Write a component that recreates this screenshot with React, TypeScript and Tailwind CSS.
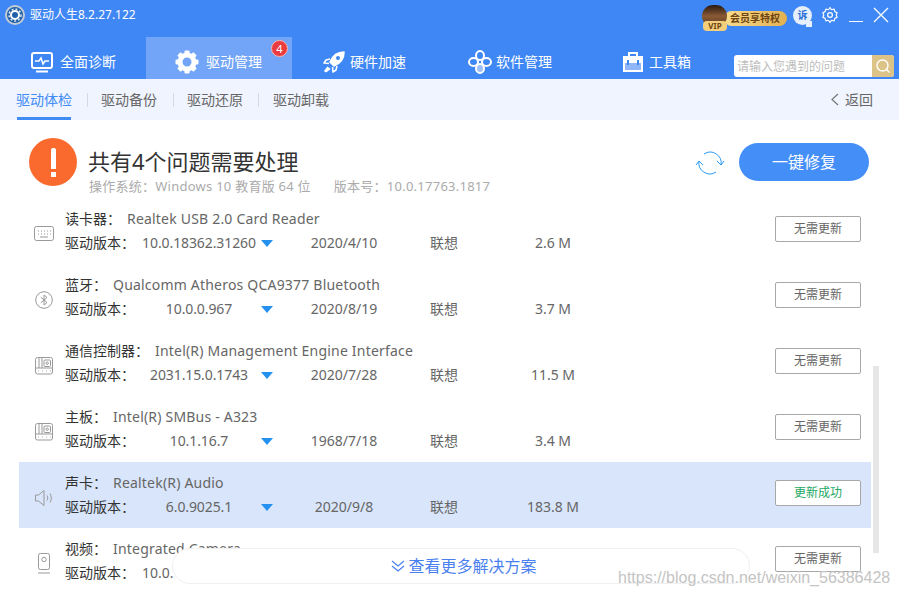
import React from "react";

function Monitor() {
  return (
    <svg width="24" height="24" viewBox="0 0 24 24" fill="none" className="stroke-white">
      <rect x="2" y="3" width="20" height="15" rx="2" strokeWidth="2" />
      <path d="M5 11h4l2-3 2 6 2-3h4" strokeWidth="1.5" />
      <path d="M6 21.5h12" strokeWidth="2" />
    </svg>
  );
}
function Gear({ size = 24, sw = 5 }: { size?: number; sw?: number }) {
  const teeth = Array.from({ length: 8 }, (_, i) => i * 45);
  return (
    <svg width={size} height={size} viewBox="0 0 24 24" fill="none">
      {teeth.map((a) => (
        <rect key={a} x="9.5" y="0.5" width="5" height="6" rx="1" fill="#fff" transform={`rotate(${a} 12 12)`} />
      ))}
      <circle cx="12" cy="12" r="7" stroke="#fff" strokeWidth={sw} />
    </svg>
  );
}
function Rocket() {
  return (
    <svg width="24" height="24" viewBox="0 0 24 24" fill="none" stroke="#fff" strokeWidth="1.6" strokeLinejoin="round">
      <path d="M22 2c-6 0-11 3-14 10l4 4c7-3 10-8 10-14Z" fill="#fff" />
      <circle cx="16" cy="8" r="2" fill="#3f87f5" stroke="none" />
      <path d="M8 9 4 10l-2 3 5 .5M15 16l-1 4-3 2-.5-5" />
      <path d="M6 17l-3 4 1 .5 4-3" fill="#fff" />
    </svg>
  );
}
function Flower() {
  return (
    <svg width="24" height="24" viewBox="0 0 24 24" fill="none" stroke="#fff" strokeWidth="2">
      <ellipse cx="12" cy="5.5" rx="4" ry="4.5" />
      <ellipse cx="12" cy="18.5" rx="4" ry="4.5" fill="#9cc0fa" />
      <ellipse cx="5.5" cy="12" rx="4.5" ry="4" />
      <ellipse cx="18.5" cy="12" rx="4.5" ry="4" />
    </svg>
  );
}
function Toolbox() {
  return (
    <svg width="22" height="22" viewBox="0 0 22 22" fill="none">
      <path d="M7 5V2h8v3" stroke="#fff" strokeWidth="2" />
      <rect x="1" y="5" width="20" height="16" fill="#fff" />
      <rect x="3" y="12" width="16" height="7" fill="#8fb6f8" />
      <rect x="5" y="9" width="2" height="5" fill="#3f87f5" />
      <rect x="15" y="9" width="2" height="5" fill="#3f87f5" />
    </svg>
  );
}
function Keyboard() {
  return (
    <svg width="20" height="15" viewBox="0 0 20 15" fill="none" stroke="#999">
      <rect x="0.5" y="0.5" width="19" height="14" rx="2" />
      <path d="M4 5h1M7 5h1M10 5h1M13 5h1M16 5h1M4 8h1M7 8h1M10 8h1M13 8h1M16 8h1M6 11h8" />
    </svg>
  );
}
function Bluetooth() {
  return (
    <svg width="18" height="18" viewBox="0 0 18 18" fill="none" stroke="#999">
      <circle cx="9" cy="9" r="8.3" />
      <path d="M5.8 6.2 12 11.5 9 14V4l3 2.5-6.2 5.3" />
    </svg>
  );
}
function Board() {
  return (
    <svg width="18" height="18" viewBox="0 0 18 18" fill="none" stroke="#999">
      <rect x="0.5" y="0.5" width="17" height="16.5" rx="2" />
      <path d="M1 11h16M4 1v10M7 1v10M3 14h0.8M7 14h0.8M11 14h0.8M15 14h0.8" />
      <rect x="9" y="3" width="6.5" height="6.5" rx="1" />
      <circle cx="12.2" cy="6.2" r="1.2" />
    </svg>
  );
}
function Speaker() {
  return (
    <svg width="18" height="18" viewBox="0 0 18 18" fill="none" stroke="#999">
      <path d="M0.5 6v6h3l5.5 4.5v-15L3.5 6h-3Z" />
      <path d="M12 6.5c1 1.6 1 3.4 0 5M15 4.5c1.8 3 1.8 6 0 9" />
    </svg>
  );
}
function Camera() {
  return (
    <svg width="14" height="21" viewBox="0 0 14 21" fill="none" stroke="#999">
      <rect x="1.5" y="0.5" width="11" height="16" rx="2" />
      <circle cx="7" cy="6.5" r="2.2" />
      <path d="M1 20h12" />
    </svg>
  );
}

const rows = [
  { icon: <Keyboard />, type: "读卡器", name: "Realtek USB 2.0 Card Reader", ver: "10.0.18362.31260", date: "2020/4/10", size: "2.6 M" },
  { icon: <Bluetooth />, type: "蓝牙", name: "Qualcomm Atheros QCA9377 Bluetooth", ver: "10.0.0.967", date: "2020/8/19", size: "3.7 M" },
  { icon: <Board />, type: "通信控制器", name: "Intel(R) Management Engine Interface", ver: "2031.15.0.1743", date: "2020/7/28", size: "11.5 M" },
  { icon: <Board />, type: "主板", name: "Intel(R) SMBus - A323", ver: "10.1.16.7", date: "1968/7/18", size: "3.4 M" },
  { icon: <Speaker />, type: "声卡", name: "Realtek(R) Audio", ver: "6.0.9025.1", date: "2020/9/8", size: "183.8 M", active: true },
  { icon: <Camera />, type: "视频", name: "Integrated Camera", ver: "10.0.", date: "", size: "", cut: true },
];

const tabs = [
  { label: "全面诊断", icon: <Monitor />, cls: "w-[146px] pl-[30px] gap-[6px]" },
  { label: "驱动管理", icon: <Gear />, cls: "w-[146px] pl-[29px] gap-[7px] bg-[#72a5f7] relative" },
  { label: "硬件加速", icon: <Rocket />, cls: "w-[146px] pl-[30px] gap-[4px]" },
  { label: "软件管理", icon: <Flower />, cls: "w-[184px] pl-[30px] gap-[4px]" },
  { label: "工具箱", icon: <Toolbox />, cls: "w-[112px] pl-0 gap-[5px]" },
];

export default function App() {
  return (
    <div
      className="relative w-[899px] h-[597px] overflow-hidden bg-white flex flex-col"
      style={{ fontFamily: '"Noto Sans", "Noto Sans CJK SC", sans-serif' }}
    >
      <header className="bg-[#3f87f5] h-[79px] shrink-0 text-white flex flex-col">
        <div className="h-[37px] flex items-center pl-[5px] pr-[10px]">
          <svg width="20" height="20" viewBox="0 0 20 20" fill="none" className="mt-[-8px]">
            <circle cx="10" cy="10" r="9" fill="#1f5fa8" stroke="#c3ccd6" strokeWidth="2" />
            <circle cx="10" cy="10" r="4" stroke="#fff" strokeWidth="2" />
            <circle cx="10" cy="10" r="6" stroke="#dfe7f0" strokeWidth="1.5" strokeDasharray="2 2" />
          </svg>
          <span className="ml-[5px] text-[12px] leading-none mt-[-7px]">驱动人生8.2.27.122</span>
          <div className="ml-auto flex items-center mt-[-7px]">
            <div className="relative w-[85px] h-[26px] flex items-center mt-[6px]">
              <div className="ml-[22px] w-[63px] h-[15px] rounded-full bg-gradient-to-r from-[#f7dc8e] to-[#e3b04f] text-[#6e4413] text-[10px] font-bold leading-[15px] pl-[6px] whitespace-nowrap">
                会员享特权
              </div>
              <div className="absolute left-0 top-0 w-[25px] h-[22px] rounded-full bg-gradient-to-b from-[#2a1a12] via-[#8a5a34] to-[#5b3a22]" />
              <div className="absolute left-[1px] bottom-0 w-[24px] h-[10px] rounded-[4px] bg-[#f3cf7b] text-[#6e4413] text-[8px] font-bold leading-[10px] text-center">
                VIP
              </div>
            </div>
            <div className="relative ml-[6px] w-[19px] h-[19px] rounded-full bg-[#e6effd] text-[#2d6fd8] text-[10px] font-bold leading-[19px] text-center">
              诉
              <span className="absolute right-0 bottom-[-2px] w-[6px] h-[6px] bg-[#e6effd]" />
            </div>
            <svg width="18" height="18" viewBox="0 0 24 24" fill="none" stroke="#fff" strokeWidth="1.6" className="ml-[9px]">
              <circle cx="12" cy="12" r="3.2" />
              <path d="M12 2l2 3 3.5-.8 1 3.3 3 1.5-1.2 3 1.2 3-3 1.500-1 3.300-3.500-.8-2 3-2-3-3.500.8-1-3.300-3-1.500 1.200-3-1.200-3 3-1.500 1-3.300 3.500.8Z" strokeLinejoin="round" />
            </svg>
            <div className="ml-[10px] w-[14px] h-px bg-white mt-[13px]" />
            <svg width="16" height="16" viewBox="0 0 16 16" stroke="#fff" strokeWidth="1.3" className="ml-[10px]">
              <path d="M1 1l14 14M15 1 1 15" />
            </svg>
          </div>
        </div>
        <nav className="h-[42px] flex items-stretch text-[14px]">
          {tabs.map((t) => (
            <div key={t.label} className={`${t.cls} flex items-center shrink-0 pt-[8px]`}>
              {t.icon}
              <span className="leading-none">{t.label}</span>
              {t.label === "驱动管理" && (
                <span className="absolute right-[4px] top-[3px] w-[17px] h-[17px] rounded-full bg-[#ea3b3f] border border-[#f7b7b7] text-[11px] leading-[15px] text-center">
                  4
                </span>
              )}
            </div>
          ))}
          <div className="mt-[18px] w-[160px] h-[22px] flex rounded-[3px] overflow-hidden bg-white">
            <span className="flex-1 text-[12px] text-[#bdbdbd] leading-[23px] pl-[3px]">请输入您遇到的问题</span>
            <span className="w-[22px] bg-[#dcc387] flex items-center justify-center">
              <svg width="16" height="16" viewBox="0 0 16 16" fill="none" stroke="#fff" strokeWidth="1.4">
                <circle cx="7.500" cy="7.500" r="5.500" />
                <path d="M11.500 11.500 14.500 14.500" />
              </svg>
            </span>
          </div>
        </nav>
      </header>

      <div className="h-[41px] shrink-0 bg-[#f0f4fe] flex items-center text-[14px] text-[#666] pl-[16px] pr-[26px]">
        <span className="relative w-[56px] text-[#418bf7] text-center leading-[41px]">
          驱动体检
          <span className="absolute left-[1px] right-[1px] bottom-0 h-[3px] bg-[#418bf7]" />
        </span>
        <span className="w-px h-[14px] bg-[#d5d9e2] ml-[15px] mr-[13px]" />
        <span>驱动备份</span>
        <span className="w-px h-[14px] bg-[#d5d9e2] ml-[16px] mr-[13px]" />
        <span>驱动还原</span>
        <span className="w-px h-[14px] bg-[#d5d9e2] ml-[15px] mr-[14px]" />
        <span>驱动卸载</span>
        <svg width="9" height="13" viewBox="0 0 9 13" fill="none" stroke="#777" strokeWidth="1.2" className="ml-auto">
          <path d="M8 1 2 6.500 8 12" />
        </svg>
        <span className="ml-[6px]">返回</span>
      </div>

      <section className="h-[87px] shrink-0 flex pl-[29px] pr-[30px] pt-[18px]">
        <div className="w-[48px] h-[48px] rounded-full bg-[#fa6a2e] flex flex-col items-center justify-center gap-[3px]">
          <span className="w-[5px] h-[21px] bg-white rounded-t-[2px]" />
          <span className="w-[5px] h-[5px] bg-white" />
        </div>
        <div className="ml-[11px] mt-[11px] flex flex-col">
          <h1 className="text-[22px] leading-[24px] text-[#333] font-normal">共有4个问题需要处理</h1>
          <p className="text-[13px] leading-[18px] mt-[4px] pl-px text-[#ababab] whitespace-nowrap tracking-[0.25px]">
            操作系统：Windows 10 教育版 64 位<span className="ml-[23px]">版本号：10.0.17763.1817</span>
          </p>
        </div>
        <div className="ml-auto flex items-start">
          <svg width="30" height="24" viewBox="0 0 30 24" fill="none" stroke="#2b9af3" strokeWidth="1" className="mt-[13px] mr-[14px]">
            <path d="M9 3A11 11 0 0 1 26 14M22 10l4 4 3-4" />
            <path d="M21 21A11 11 0 0 1 4 10M1 14l3-4 4 4" />
          </svg>
          <button className="w-[130px] h-[38px] mt-[5px] rounded-full bg-[#448ef7] text-white text-[16px]">一键修复</button>
        </div>
      </section>

      <div className="flex-1 min-h-0 overflow-hidden flex pl-[19px]">
        <ul className="w-[852px] shrink-0 mt-[-9px]">
          {rows.map((r) => (
            <li key={r.type} className={`h-[66px] flex relative ${r.active ? "bg-[#d8e5fa]" : ""}`}>
              <div className="w-[46px] shrink-0 flex items-center justify-center pl-[4px] pt-[5px]">{r.icon}</div>
              <div className="w-[710px] shrink-0 pt-[9px] text-[14px] text-[#666] leading-[24px]">
                <div className="whitespace-nowrap">
                  <span className="text-[#333]">{r.type}：</span>
                  <span className="ml-[6px] tracking-[0.2px]">{r.name}</span>
                </div>
                <div className="flex items-center">
                  <span className="w-[77px] text-[#333] shrink-0">驱动版本：</span>
                  {r.cut ? (
                    <span className="shrink-0">{r.ver}</span>
                  ) : (
                    <>
                      <span className="w-[114px] text-center shrink-0 tracking-[-0.1px]">{r.ver}</span>
                      <svg width="12" height="7" viewBox="0 0 12 7" className="ml-[5px] shrink-0">
                        <path d="M0 0h12L6 7Z" fill="#2491ee" />
                      </svg>
                      <span className="w-[96px] ml-[23px] text-center shrink-0">{r.date}</span>
                      <span className="ml-[38px] w-[28px] shrink-0">联想</span>
                      <span className="ml-[55px] w-[80px] text-center shrink-0">{r.size}</span>
                    </>
                  )}
                </div>
              </div>
              <button
                className={`mt-[18px] w-[86px] h-[26px] bg-white border border-[#a8a8a8] rounded-[2px] text-[12px] ${r.active ? "text-[#21a862]" : "text-[#666]"}`}
              >
                {r.active ? "更新成功" : "无需更新"}
              </button>
            </li>
          ))}
        </ul>
        <div className="ml-[2px] w-[6px] mt-[159px] h-[187px] bg-[#e6e6e6]" />
      </div>

      <div className="absolute left-[172px] top-[548px] w-[578px] h-[36px] rounded-full bg-white border border-[#f0f0f0] flex items-center justify-center text-[#4a7ff0] text-[16px] gap-[3px] pl-[6px]">
        <svg width="14" height="14" viewBox="0 0 14 14" fill="none" stroke="#4a7ff0" strokeWidth="1.2">
          <path d="M1 2l6 5 6-5M1 7l6 5 6-5" />
        </svg>
        查看更多解决方案
      </div>
      <div
        className="absolute left-[618px] top-[568px] text-[16px] leading-[20px] text-[#c4c4c4] whitespace-nowrap"
        style={{ fontFamily: '"Liberation Sans", sans-serif' }}
      >
        https://blog.csdn.net/weixin_56386428
      </div>
    </div>
  );
}
